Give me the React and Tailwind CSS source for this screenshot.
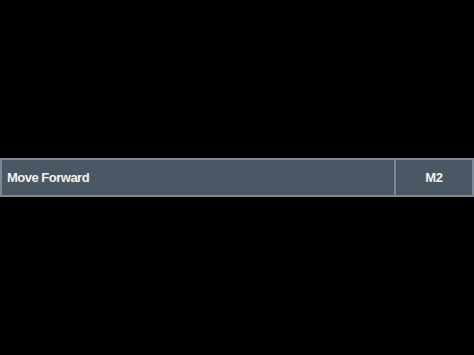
import React from 'react';

export default function App() {
  return (
    <div className="w-[474px] h-[355px] bg-black flex flex-col pt-[158px]">
      <div className="flex h-[39px] border-2 border-[#7d8894] bg-[#4a5866] text-[13px] font-bold text-[#f2f2ea] font-['Liberation_Sans',Arial,sans-serif]">
        <div className="flex-1 flex items-center pl-[5px] tracking-[-0.5px]">
          Move Forward
        </div>
        <div className="w-[2px] bg-[#7d8894]" />
        <div className="w-[76px] flex items-center justify-center tracking-[-0.3px]">
          M2
        </div>
      </div>
    </div>
  );
}
